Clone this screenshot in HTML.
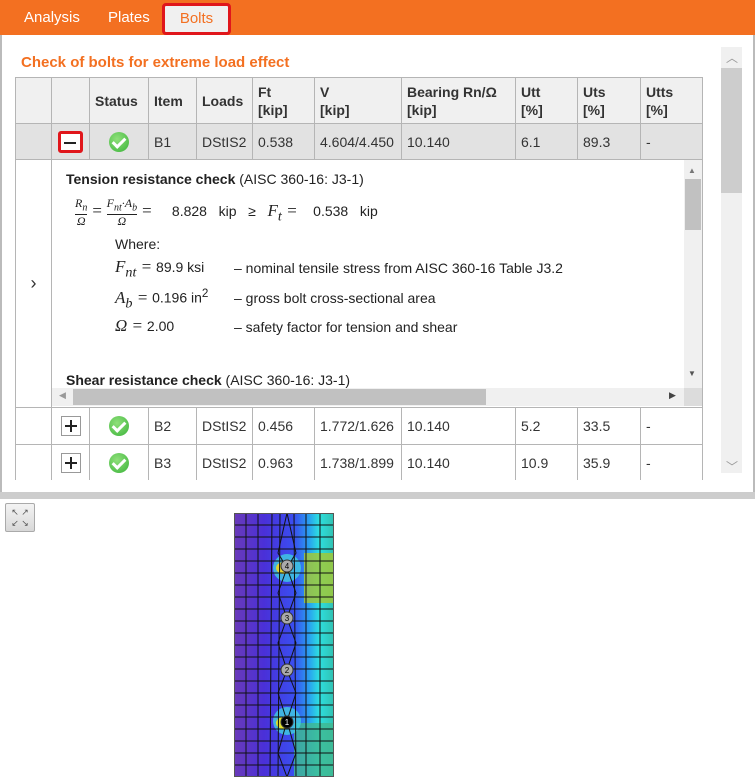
<!DOCTYPE html>
<html><head><style>
*{margin:0;padding:0;box-sizing:border-box}
body{width:755px;height:781px;background:#fff;font-family:"Liberation Sans",sans-serif;position:relative;overflow:hidden;color:#333}
.abs{position:absolute}
.top{left:0;top:0;width:755px;height:35px;background:#f37021}
.tab{top:9px;font-size:15px;color:#fff}
.panel{left:0;top:35px;width:755px;height:458px;border-left:2px solid #bbb;border-right:2px solid #bbb;background:#fff}
.band{left:0;top:492px;width:755px;height:7px;background:#cdcdcd}
.title{left:21px;top:54px;font-size:15px;font-weight:bold;color:#f37021}
table{position:absolute;left:15px;top:77px;border-collapse:collapse;font-size:14px}
td{border:1px solid #b5b5b5;padding:0 5px;vertical-align:middle;white-space:nowrap}
.hd td{background:#f0f0f0;font-weight:bold;height:46px;color:#333;line-height:18px}
.r1 td{background:#e2e2e2;height:36px}
.rr td{height:37px}
.chk{display:inline-block;width:20px;height:20px;border-radius:50%;background:radial-gradient(circle at 40% 35%,#8fe07a,#3bb33a);position:relative;vertical-align:middle}
.chk:after{content:"";position:absolute;left:6px;top:3px;width:5px;height:10px;border:solid #fff;border-width:0 3px 3px 0;transform:rotate(45deg)}
.pm{display:inline-block;width:20px;height:20px;border:1px solid #999;background:#fff;position:relative;vertical-align:middle}
.pm:before{content:"";position:absolute;left:3px;top:8px;width:12px;height:2px;background:#222}
.plus:after{content:"";position:absolute;left:8px;top:3px;width:2px;height:12px;background:#222}
.det{font-family:"Liberation Sans",sans-serif;font-size:14px;color:#222}
.m{font-family:"Liberation Serif",serif;font-style:italic;font-size:17px}
</style></head><body>
<div class="abs top"></div>
<div class="abs tab" style="left:24px">Analysis</div>
<div class="abs tab" style="left:108px">Plates</div>
<div class="abs" style="left:162px;top:3px;width:69px;height:32px;border:3px solid #e0161b;border-radius:4px;background:#f0f0f0;color:#f37021;font-size:15px;text-align:center;line-height:25px">Bolts</div>
<div class="abs panel"></div>
<div class="abs band"></div>
<div class="abs title">Check of bolts for extreme load effect</div>
<table>
<tr class="hd"><td style="width:36px"></td><td style="width:38px"></td><td style="width:59px">Status</td><td style="width:48px">Item</td><td style="width:56px">Loads</td><td style="width:62px">Ft<br>[kip]</td><td style="width:87px">V<br>[kip]</td><td style="width:114px">Bearing Rn/Ω<br>[kip]</td><td style="width:62px">Utt<br>[%]</td><td style="width:63px">Uts<br>[%]</td><td style="width:62px">Utts<br>[%]</td></tr>
<tr class="r1"><td></td><td style="text-align:center"><span class="pm" style="border:3px solid #e0161b;border-radius:3px;width:25px;height:22px"></span></td><td style="text-align:center"><span class="chk"></span></td><td>B1</td><td>DStIS2</td><td>0.538</td><td>4.604/4.450</td><td>10.140</td><td>6.1</td><td>89.3</td><td>-</td></tr>
<tr><td style="height:248px;text-align:center;font-size:18px">›</td><td colspan="10" style="padding:0;background:#fff"></td></tr>
<tr class="rr"><td></td><td style="text-align:center"><span class="pm plus"></span></td><td style="text-align:center"><span class="chk"></span></td><td>B2</td><td>DStIS2</td><td>0.456</td><td>1.772/1.626</td><td>10.140</td><td>5.2</td><td>33.5</td><td>-</td></tr>
<tr class="rr"><td></td><td style="text-align:center"><span class="pm plus"></span></td><td style="text-align:center"><span class="chk"></span></td><td>B3</td><td>DStIS2</td><td>0.963</td><td>1.738/1.899</td><td>10.140</td><td>10.9</td><td>35.9</td><td>-</td></tr>
</table>
<div class="abs" style="left:3px;top:480px;width:715px;height:12px;background:#fff"></div>
<div class="abs det" style="left:66px;top:171px"><b>Tension resistance check</b> (AISC 360-16: J3-1)</div>
<div class="abs det" style="left:75px;top:197px;width:500px"><span class="m" style="font-size:12px;display:inline-block;text-align:center;vertical-align:middle;line-height:12px">R<sub>n</sub><br><span style="border-top:1px solid #222;display:block">Ω</span></span> <span class="m">=</span> <span class="m" style="font-size:12px;display:inline-block;text-align:center;vertical-align:middle;line-height:12px">F<sub>nt</sub>·A<sub>b</sub><br><span style="border-top:1px solid #222;display:block">Ω</span></span> <span class="m">=</span> &nbsp;&nbsp;&nbsp;&nbsp;8.828 &nbsp;&nbsp;kip &nbsp;&nbsp;≥ &nbsp;&nbsp;<span class="m">F<sub>t</sub> =</span> &nbsp;&nbsp;&nbsp;0.538 &nbsp;&nbsp;kip</div>
<div class="abs det" style="left:115px;top:236px">Where:</div>
<div class="abs det" style="left:115px;top:257px"><span class="m">F<sub>nt</sub> =</span> 89.9 ksi</div><div class="abs det" style="left:234px;top:260px">– nominal tensile stress from AISC 360-16 Table J3.2</div>
<div class="abs det" style="left:115px;top:287px"><span class="m">A<sub>b</sub> =</span> 0.196 in<sup>2</sup></div><div class="abs det" style="left:234px;top:290px">– gross bolt cross-sectional area</div>
<div class="abs det" style="left:115px;top:316px"><span class="m">Ω =</span> 2.00</div><div class="abs det" style="left:234px;top:319px">– safety factor for tension and shear</div>
<div class="abs det" style="left:66px;top:372px"><b>Shear resistance check</b> (AISC 360-16: J3-1)</div>
<div class="abs" style="left:684px;top:160px;width:18px;height:228px;background:#f0f0f0"></div>
<div class="abs" style="left:685px;top:179px;width:16px;height:51px;background:#c1c1c1"></div>
<div class="abs" style="left:688px;top:166px;font-size:8px;color:#777">▲</div>
<div class="abs" style="left:688px;top:369px;font-size:8px;color:#555">▼</div>
<div class="abs" style="left:52px;top:388px;width:650px;height:18px;background:#f0f0f0"></div>
<div class="abs" style="left:73px;top:389px;width:413px;height:16px;background:#c1c1c1"></div>
<div class="abs" style="left:59px;top:390px;font-size:9px;color:#999">◀</div>
<div class="abs" style="left:669px;top:390px;font-size:9px;color:#444">▶</div>
<div class="abs" style="left:684px;top:388px;width:18px;height:18px;background:#dcdcdc"></div>
<div class="abs" style="left:721px;top:47px;width:21px;height:426px;background:#f0f0f0"></div>
<div class="abs" style="left:721px;top:68px;width:21px;height:125px;background:#cdcdcd"></div>
<div class="abs" style="left:726px;top:49px;font-size:12px;color:#999">︿</div>
<div class="abs" style="left:726px;top:458px;font-size:12px;color:#999">﹀</div>
<div class="abs" style="left:5px;top:503px;width:30px;height:29px;border:1px solid #aaa;border-radius:2px;background:linear-gradient(#f4f4f4,#d8d8d8);font-size:9px;color:#555;text-align:center;line-height:11px;padding-top:3px">↖ ↗<br>↙ ↘</div>
<svg class="abs" style="left:234px;top:513px" width="100" height="264" viewBox="0 0 100 264">
<defs><linearGradient id="g" x1="0" x2="1"><stop offset="0" stop-color="#6a3ab8"/><stop offset=".3" stop-color="#4a30d8"/><stop offset=".6" stop-color="#3a4ef0"/><stop offset=".75" stop-color="#28a0f0"/><stop offset=".85" stop-color="#2ee0e0"/><stop offset="1" stop-color="#30c0b0"/></linearGradient></defs>
<rect width="100" height="264" fill="url(#g)"/>
<rect x="70" y="40" width="30" height="50" fill="#a8c830" opacity=".8"/>
<rect x="60" y="210" width="40" height="54" fill="#40b890" opacity=".8"/>
<circle cx="53" cy="55" r="14" fill="#40d0e0" opacity=".8"/>
<circle cx="53" cy="208" r="14" fill="#40d0e0" opacity=".8"/>
<ellipse cx="50" cy="210" rx="8" ry="6" fill="#e0e030"/>
<ellipse cx="50" cy="55" rx="8" ry="6" fill="#e0d030"/>
<g stroke="#111" stroke-width="1" fill="none">
<path d="M12 0V264M24 0V264M38 0L36 264M46 0L44 264M60 0L62 264M72 0V264M86 0V264"/>
<path d="M0 12H100M0 24H100M0 36H100M0 48H100M0 60H100M0 72H100M0 84H100M0 96H100M0 108H100M0 120H100M0 132H100M0 144H100M0 156H100M0 168H100M0 180H100M0 192H100M0 204H100M0 216H100M0 228H100M0 240H100M0 252H100"/>
<path d="M53 0L44 40L53 55L62 40ZM53 55L44 80L53 105L62 80ZM53 105L44 130L53 157L62 130ZM53 157L44 180L53 208L62 180ZM53 208L44 240L53 264L62 240Z"/>
</g>
<rect x=".5" y=".5" width="99" height="263" fill="none" stroke="#555"/>
<g font-size="8" text-anchor="middle" font-family="Liberation Sans">
<circle cx="53" cy="53" r="6" fill="#aaa" stroke="#333"/><text x="53" y="56">4</text>
<circle cx="53" cy="105" r="6" fill="#aaa" stroke="#333"/><text x="53" y="108">3</text>
<circle cx="53" cy="157" r="6" fill="#aaa" stroke="#333"/><text x="53" y="160">2</text>
<circle cx="53" cy="209" r="6" fill="#000" stroke="#333"/><text x="53" y="212" fill="#fff">1</text>
</g>
</svg>
</body></html>
